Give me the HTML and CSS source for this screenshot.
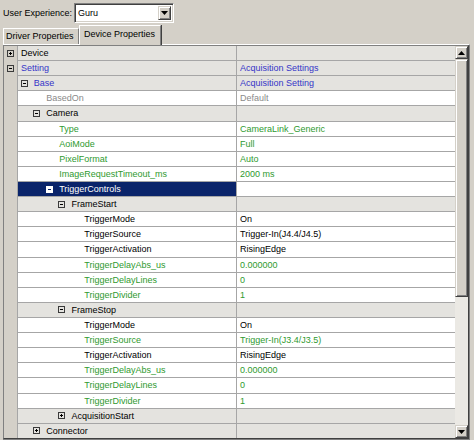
FILE: index.html
```html
<!DOCTYPE html>
<html>
<head>
<meta charset="utf-8">
<link rel="stylesheet" href="styles.css">
</head>
<body>
<div class="top">
  <span class="lbl">User Experience:</span>
  <div class="combo">
    <span class="combo-text">Guru</span>
    <span class="btn combo-btn"><svg width="7" height="4" viewBox="0 0 7 4"><path d="M0 0h7L3.5 4z" fill="#000"/></svg></span>
  </div>
</div>
<div class="tabs">
  <div class="tab">Driver Properties</div>
  <div class="tab active">Device Properties</div>
</div>
<div class="panel">
  <div class="grid">
    <div class="rows">
      <div class="row cat"><div class="gutter"><svg class="ex" viewBox="0 0 7 7"><rect x=".5" y=".5" width="6" height="6"/><path d="M2 3.5h3M3.5 2v3"/></svg></div><div class="label l0">Device</div><div class="value"></div></div>
      <div class="row cat blue"><div class="gutter"><svg class="ex" viewBox="0 0 7 7"><rect x=".5" y=".5" width="6" height="6"/><path d="M2 3.5h3"/></svg></div><div class="label l0">Setting</div><div class="value">Acquisition Settings</div></div>
      <div class="row cat blue"><div class="gutter"></div><div class="label i1"><svg class="ex" viewBox="0 0 7 7"><rect x=".5" y=".5" width="6" height="6"/><path d="M2 3.5h3"/></svg>Base</div><div class="value">Acquisition Setting</div></div>
      <div class="row gray"><div class="gutter"></div><div class="label t2">BasedOn</div><div class="value">Default</div></div>
      <div class="row cat"><div class="gutter"></div><div class="label i2"><svg class="ex" viewBox="0 0 7 7"><rect x=".5" y=".5" width="6" height="6"/><path d="M2 3.5h3"/></svg>Camera</div><div class="value"></div></div>
      <div class="row green"><div class="gutter"></div><div class="label t3">Type</div><div class="value">CameraLink_Generic</div></div>
      <div class="row green"><div class="gutter"></div><div class="label t3">AoiMode</div><div class="value">Full</div></div>
      <div class="row green"><div class="gutter"></div><div class="label t3">PixelFormat</div><div class="value">Auto</div></div>
      <div class="row green"><div class="gutter"></div><div class="label t3">ImageRequestTimeout_ms</div><div class="value">2000 ms</div></div>
      <div class="row sel"><div class="gutter"></div><div class="label i3"><svg class="ex" viewBox="0 0 7 7"><rect x=".5" y=".5" width="6" height="6"/><path d="M2 3.5h3"/></svg>TriggerControls</div><div class="value"></div></div>
      <div class="row cat"><div class="gutter"></div><div class="label i4"><svg class="ex" viewBox="0 0 7 7"><rect x=".5" y=".5" width="6" height="6"/><path d="M2 3.5h3"/></svg>FrameStart</div><div class="value"></div></div>
      <div class="row"><div class="gutter"></div><div class="label t5">TriggerMode</div><div class="value">On</div></div>
      <div class="row"><div class="gutter"></div><div class="label t5">TriggerSource</div><div class="value">Trigger-In(J4.4/J4.5)</div></div>
      <div class="row"><div class="gutter"></div><div class="label t5">TriggerActivation</div><div class="value">RisingEdge</div></div>
      <div class="row green"><div class="gutter"></div><div class="label t5">TriggerDelayAbs_us</div><div class="value">0.000000</div></div>
      <div class="row green"><div class="gutter"></div><div class="label t5">TriggerDelayLines</div><div class="value">0</div></div>
      <div class="row green"><div class="gutter"></div><div class="label t5">TriggerDivider</div><div class="value">1</div></div>
      <div class="row cat"><div class="gutter"></div><div class="label i4"><svg class="ex" viewBox="0 0 7 7"><rect x=".5" y=".5" width="6" height="6"/><path d="M2 3.5h3"/></svg>FrameStop</div><div class="value"></div></div>
      <div class="row"><div class="gutter"></div><div class="label t5">TriggerMode</div><div class="value">On</div></div>
      <div class="row green"><div class="gutter"></div><div class="label t5">TriggerSource</div><div class="value">Trigger-In(J3.4/J3.5)</div></div>
      <div class="row"><div class="gutter"></div><div class="label t5">TriggerActivation</div><div class="value">RisingEdge</div></div>
      <div class="row green"><div class="gutter"></div><div class="label t5">TriggerDelayAbs_us</div><div class="value">0.000000</div></div>
      <div class="row green"><div class="gutter"></div><div class="label t5">TriggerDelayLines</div><div class="value">0</div></div>
      <div class="row green"><div class="gutter"></div><div class="label t5">TriggerDivider</div><div class="value">1</div></div>
      <div class="row cat"><div class="gutter"></div><div class="label i4"><svg class="ex" viewBox="0 0 7 7"><rect x=".5" y=".5" width="6" height="6"/><path d="M2 3.5h3M3.5 2v3"/></svg>AcquisitionStart</div><div class="value"></div></div>
      <div class="row cat"><div class="gutter"></div><div class="label i2"><svg class="ex" viewBox="0 0 7 7"><rect x=".5" y=".5" width="6" height="6"/><path d="M2 3.5h3M3.5 2v3"/></svg>Connector</div><div class="value"></div></div>
    </div>
    <div class="scrollbar">
      <div class="btn sb-btn"><svg width="7" height="4" viewBox="0 0 7 4"><path d="M0 4h7L3.5 0z" fill="#000"/></svg></div>
      <div class="btn thumb"></div>
      <div class="track"></div>
      <div class="btn sb-btn"><svg width="7" height="4" viewBox="0 0 7 4"><path d="M0 0h7L3.5 4z" fill="#000"/></svg></div>
    </div>
  </div>
</div>
</body>
</html>
```
FILE: styles.css
```css
html, body {
  margin: 0;
  padding: 0;
}
body {
  width: 474px;
  height: 440px;
  overflow: hidden;
  background: #d4d0c8;
  font-family: "Liberation Sans", Arial, sans-serif;
  font-size: 9px;
  color: #000;
}
.top {
  height: 24px;
  box-sizing: border-box;
  padding: 3px 0 0 3px;
  display: flex;
  align-items: flex-start;
}
.lbl {
  width: 71px;
  line-height: 20px;
}
.combo {
  width: 100px;
  height: 20px;
  box-sizing: border-box;
  border: 1px solid;
  border-color: #808080 #fff #fff #808080;
  box-shadow: inset 1px 1px #404040, inset -1px -1px #d4d0c8;
  background: #fff;
  display: flex;
  align-items: center;
  padding: 2px;
}
.combo-text {
  flex: 1;
  padding-left: 1px;
}
.btn {
  background: #d4d0c8;
  box-sizing: border-box;
  border: 1px solid;
  border-color: #d4d0c8 #404040 #404040 #d4d0c8;
  box-shadow: inset 1px 1px #fff, inset -1px -1px #808080;
  display: flex;
  align-items: center;
  justify-content: center;
}
.combo-btn {
  width: 13px;
  height: 14px;
}
.tabs {
  height: 20px;
  display: flex;
  align-items: flex-end;
  padding-left: 3px;
  position: relative;
  z-index: 1;
}
.tab {
  height: 16px;
  width: 76px;
  box-sizing: border-box;
  border-top: 1px solid #fff;
  border-left: 1px solid #fff;
  border-right: 1px solid #808080;
  padding-left: 2px;
  line-height: 15px;
}
.tab.active {
  height: 20px;
  width: 82px;
  margin-bottom: -1px;
  padding-left: 4px;
  line-height: 17px;
  box-shadow: 1px 0 #404040;
  background: #d4d0c8;
}
.panel {
  margin-left: 3px;
  width: 467px;
  height: 396px;
  box-sizing: border-box;
  border-top: 1px solid #fff;
  border-right: 1px solid #808080;
  border-bottom: 1px solid #808080;
}
.grid {
  height: 100%;
  box-sizing: border-box;
  border-top: 1px solid #808080;
  border-left: 1px solid #808080;
  border-right: 1px solid #404040;
  border-bottom: 1px solid #404040;
  display: flex;
  overflow: hidden;
}
.rows {
  flex: 1;
  min-width: 0;
}
.row {
  --bg: #fff;
  height: 15.12px;
  display: flex;
  align-items: stretch;
  white-space: nowrap;
}
.row.cat {
  --bg: #e4e3df;
}
.gutter {
  width: 14px;
  flex: none;
  box-sizing: border-box;
  border-right: 1px solid #a6a6a6;
  background: #d4d0c8;
  padding-left: 3px;
  display: flex;
  align-items: center;
}
.label {
  width: 219px;
  flex: none;
  box-sizing: border-box;
  background: var(--bg);
  border-right: 1px solid #a6a6a6;
  border-bottom: 1px solid #a6a6a6;
  display: flex;
  align-items: center;
  overflow: hidden;
}
.value {
  flex: 1;
  background: var(--bg);
  border-bottom: 1px solid #a6a6a6;
  padding-left: 3px;
  display: flex;
  align-items: center;
}
.l0 { padding-left: 3px; }
.i1 { padding-left: 2.6px; }
.i2 { padding-left: 15.1px; }
.i3 { padding-left: 28px; }
.i4 { padding-left: 40.4px; }
.t2 { padding-left: 28.3px; }
.t3 { padding-left: 41.2px; }
.t5 { padding-left: 66.3px; }
.ex {
  width: 7px;
  height: 7px;
  flex: none;
  margin-right: 6.2px;
  shape-rendering: crispEdges;
}
.ex rect {
  fill: none;
  stroke: #3a3a3a;
}
.ex path {
  stroke: #000;
}
.blue { color: #3535c8; }
.green { color: #2f9a2f; }
.gray { color: #8a8a8a; }
.row.sel .label {
  background: #0a246a;
  color: #fff;
}
.row.sel .ex rect {
  fill: #fff;
  stroke: #fff;
}
.row.sel .ex path {
  stroke: #0a246a;
}
.scrollbar {
  width: 13px;
  flex: none;
  display: flex;
  flex-direction: column;
}
.sb-btn {
  height: 13px;
  flex: none;
}
.thumb {
  height: 238px;
  flex: none;
}
.track {
  flex: 1;
  background: #ebe9e4;
}
```
